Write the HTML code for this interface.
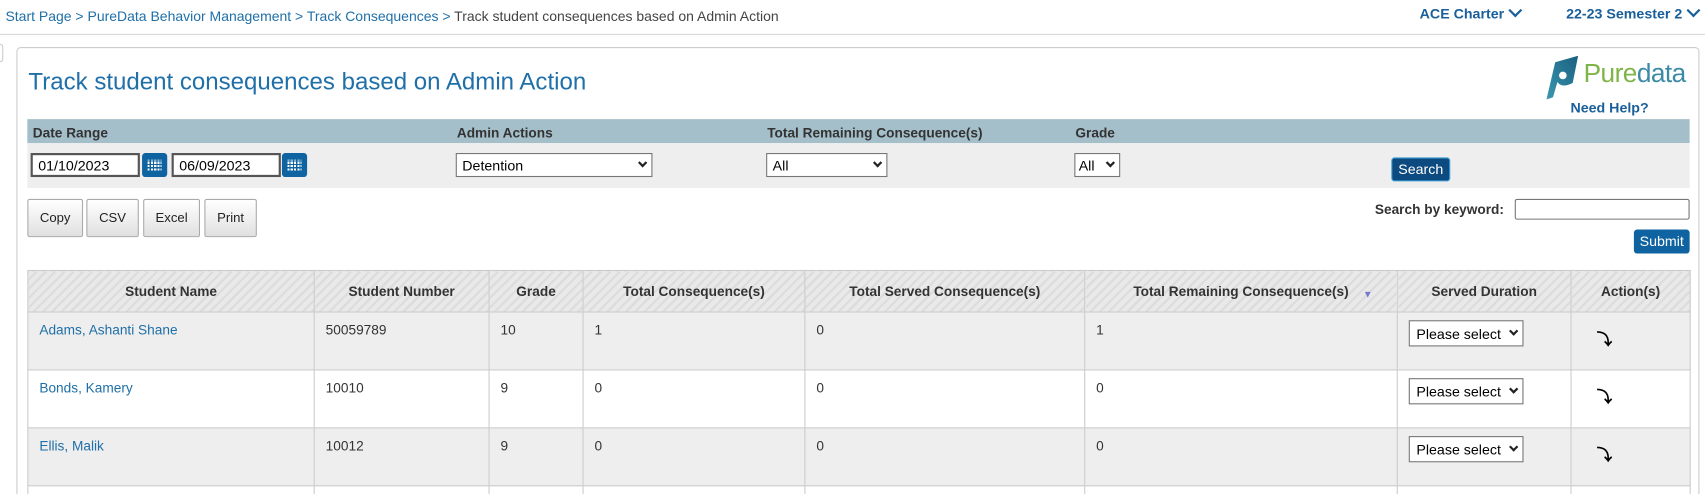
<!DOCTYPE html>
<html><head><meta charset="utf-8"><style>
*{box-sizing:border-box;margin:0;padding:0}
html,body{width:1705px;height:494px;overflow:hidden}
body{background:#fff;font-family:"Liberation Sans",Arial,sans-serif;font-size:13px;color:#333}
#c{position:relative;width:1705px;height:494px;overflow:hidden}
#w{position:absolute;left:0;top:0;width:1560px;height:452px;transform:scale(1.0929);transform-origin:0 0}
.a{position:absolute}
.lnk{color:#1f6fa8}
.bc{left:5px;top:7px;font-size:12.8px;color:#1f6fa8;white-space:nowrap}
.bc span{color:#444}
.top{top:5px;font-size:13px;font-weight:bold;color:#1a5f9a;white-space:nowrap}
.chev{display:inline-block;width:9px;height:9px;border-right:2px solid #1a5f9a;border-bottom:2px solid #1a5f9a;transform:rotate(45deg);margin-left:6px;position:relative;top:-3px}
.inp{background:#fff;border:1px solid #767676;height:22px;font-size:13px;padding:3px 5px;color:#000;white-space:nowrap;display:flex;justify-content:space-between;align-items:center}
.cal{width:23px;height:22px;background:#0f63a0;border-radius:3px}
.cal::after{content:"";position:absolute;left:5px;top:6px;width:13px;height:10px;background:repeating-linear-gradient(90deg,#fff 0 2px,transparent 2px 3px),#0f63a0;-webkit-mask:repeating-linear-gradient(0deg,#000 0 2px,transparent 2px 3px);}
.btn{border:1px solid #aaa;background:linear-gradient(#fff,#e0e0e0);font-size:12px;color:#222;text-align:center;line-height:33px;height:35px;border-radius:2px}
table{position:absolute;left:25px;top:247px;border-collapse:collapse;width:1521px;table-layout:fixed}
th{height:38px;font-weight:bold;font-size:12.5px;color:#333;border:1px solid #ccc;background:repeating-linear-gradient(135deg,#e9e9e9 0 4px,#dcdcdc 4px 6px)}
td{height:53px;border:1px solid #ccc;vertical-align:top;padding:9px 10px;font-size:12.5px;color:#333}
tr.g td{background:#eee}
.sel{display:flex;justify-content:space-between;align-items:center;border:1px solid #767676;background:#fff;width:105px;height:24px;font-size:13px;padding:0 5px 0 6px;color:#000;margin-top:-2px;white-space:nowrap}
.ck{display:inline-block;width:6px;height:6px;border-right:2px solid #222;border-bottom:2px solid #222;transform:rotate(45deg);margin-top:-4px}
.ar{padding-left:23px;padding-top:14px;font-weight:bold;font-size:14px;color:#000}
</style></head><body><div id="c"><div id="w">
<div class="a bc">Start Page &gt; PureData Behavior Management &gt; Track Consequences &gt; <span>Track student consequences based on Admin Action</span></div>
<div class="a top" style="left:1299px">ACE Charter<i class="chev"></i></div>
<div class="a top" style="left:1433px">22-23 Semester 2<i class="chev"></i></div>
<div class="a" style="left:0;top:31px;width:1560px;height:1px;background:#d8d8d8"></div>
<div class="a" style="left:-5px;top:40px;width:8px;height:17px;border:1px solid #ccc;border-radius:3px"></div>
<div class="a" style="left:15px;top:43px;width:1540px;height:460px;border:1px solid #ccc;border-radius:4px"></div>
<div class="a" style="left:26px;top:62px;font-size:22px;color:#1f6fa8;white-space:nowrap">Track student consequences based on Admin Action</div>
<svg class="a" style="left:1415px;top:51px" width="32" height="40" viewBox="0 0 32 40"><defs><linearGradient id="g" x1="0" y1="1" x2="1" y2="0"><stop offset="0" stop-color="#3a98b0"/><stop offset="1" stop-color="#1a5f80"/></linearGradient></defs><path d="M8 6 L29 0 L24 25 Q14 30 10 24 L6 38 L0 40 Z" fill="url(#g)"/><circle cx="15" cy="18" r="3.5" fill="#fff"/></svg>
<div class="a" style="left:1449px;top:54px;font-size:24px;color:#7fb548;letter-spacing:-0.5px">Pure<span style="color:#3c8aa6">data</span></div>
<div class="a" style="left:1437px;top:91px;font-size:13px;font-weight:bold;color:#1a5f9a">Need Help?</div>
<div class="a" style="left:25px;top:109px;width:1521px;height:22px;background:#a4bfca"></div>
<div class="a" style="left:25px;top:131px;width:1521px;height:41px;background:#eee"></div>
<div class="a" style="left:30px;top:115px;font-weight:bold;font-size:12.5px;color:#333">Date Range</div>
<div class="a" style="left:418px;top:115px;font-weight:bold;font-size:12.5px;color:#333">Admin Actions</div>
<div class="a" style="left:702px;top:115px;font-weight:bold;font-size:12.5px;color:#333;white-space:nowrap">Total Remaining Consequence(s)</div>
<div class="a" style="left:984px;top:115px;font-weight:bold;font-size:12.5px;color:#333">Grade</div>
<div class="a inp" style="left:28px;top:140px;width:100px;border:2px solid #555">01/10/2023</div>
<div class="a cal" style="left:130px;top:140px"></div>
<div class="a inp" style="left:157px;top:140px;width:100px;border:2px solid #555">06/09/2023</div>
<div class="a cal" style="left:258px;top:140px"></div>
<div class="a inp" style="left:417px;top:140px;width:180px">Detention<i class="ck"></i></div>
<div class="a inp" style="left:701px;top:140px;width:111px">All<i class="ck"></i></div>
<div class="a inp" style="left:983px;top:140px;width:42px;padding:3px 5px 3px 3px">All<i class="ck"></i></div>
<div class="a" style="left:1273px;top:144px;width:54px;height:22px;background:#0d4a80;border:1px solid #3da0d8;border-radius:3px;color:#fff;font-size:13px;text-align:center;line-height:20px">Search</div>
<div class="a btn" style="left:25px;top:182px;width:51px">Copy</div>
<div class="a btn" style="left:79px;top:182px;width:48px">CSV</div>
<div class="a btn" style="left:131px;top:182px;width:52px">Excel</div>
<div class="a btn" style="left:187px;top:182px;width:48px">Print</div>
<div class="a" style="left:1258px;top:185px;font-weight:bold;font-size:12.5px;color:#333;white-space:nowrap">Search by keyword:</div>
<div class="a" style="left:1386px;top:182px;width:160px;height:19px;border:1px solid #767676;border-radius:2px"></div>
<div class="a" style="left:1495px;top:210px;width:51px;height:22px;background:#0f63a0;border-radius:3px;color:#fff;font-size:13px;text-align:center;line-height:22px">Submit</div>
<table>
<colgroup><col style="width:262px"><col style="width:160px"><col style="width:86px"><col style="width:203px"><col style="width:256px"><col style="width:286px"><col style="width:159px"><col style="width:109px"></colgroup>
<tr><th>Student Name</th><th>Student Number</th><th>Grade</th><th>Total Consequence(s)</th><th>Total Served Consequence(s)</th><th style="position:relative">Total Remaining Consequence(s)<span style="position:absolute;right:22px;top:16px;color:#7777cc;font-size:9px">&#9660;</span></th><th>Served Duration</th><th>Action(s)</th></tr>
<tr class="g"><td class="lnk">Adams, Ashanti Shane</td><td>50059789</td><td>10</td><td>1</td><td>0</td><td>1</td><td><span class="sel">Please select<i class="ck"></i></span></td><td class="ar">&#10549;</td></tr>
<tr><td class="lnk">Bonds, Kamery</td><td>10010</td><td>9</td><td>0</td><td>0</td><td>0</td><td><span class="sel">Please select<i class="ck"></i></span></td><td class="ar">&#10549;</td></tr>
<tr class="g"><td class="lnk">Ellis, Malik</td><td>10012</td><td>9</td><td>0</td><td>0</td><td>0</td><td><span class="sel">Please select<i class="ck"></i></span></td><td class="ar">&#10549;</td></tr>
<tr><td></td><td></td><td></td><td></td><td></td><td></td><td></td><td></td></tr>
</table>
</div></div></body></html>
